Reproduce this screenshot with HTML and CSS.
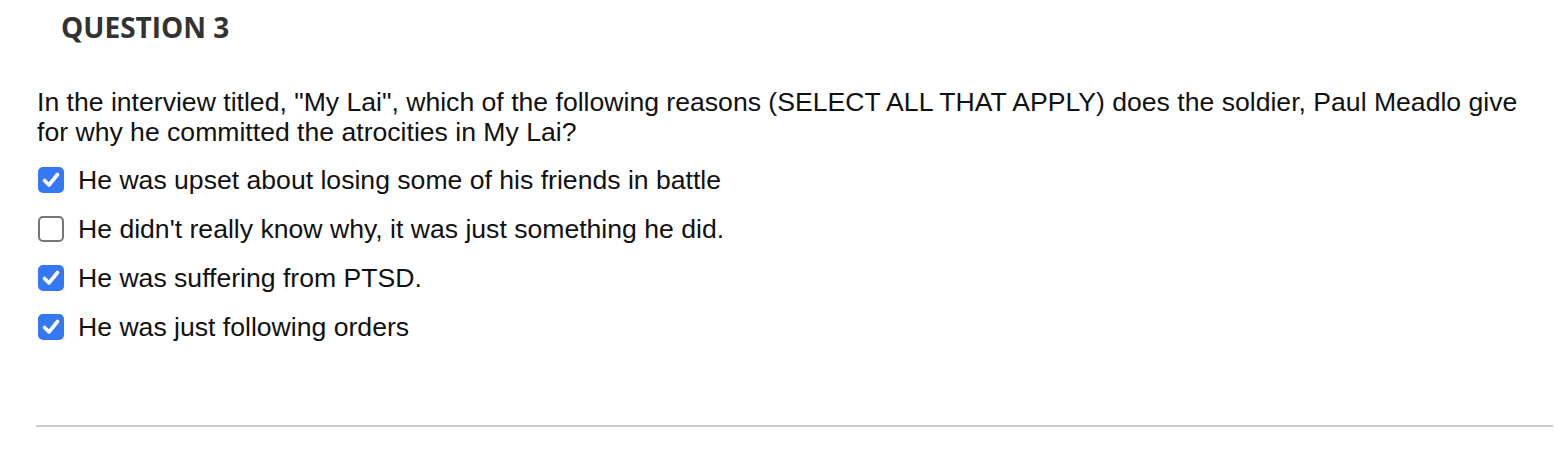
FILE: index.html
```html
<!DOCTYPE html>
<html>
<head>
<meta charset="utf-8">
<link rel="stylesheet" href="styles.css">
</head>
<body>
<div class="question">
  <h2 class="q-title">QUESTION 3</h2>
  <p class="q-text">In the interview titled, "My Lai", which of the following reasons (SELECT ALL THAT APPLY) does the soldier, Paul Meadlo give for why he committed the atrocities in My Lai?</p>
  <ul class="options">
    <li class="option"><span class="box checked"><svg viewBox="0 0 26 26"><path d="M6.5 13.5 L11 18 L19.5 7.5" fill="none" stroke="#fff" stroke-width="3.6" stroke-linecap="round" stroke-linejoin="round"/></svg></span><span class="label">He was upset about losing some of his friends in battle</span></li>
    <li class="option"><span class="box"></span><span class="label">He didn't really know why, it was just something he did.</span></li>
    <li class="option"><span class="box checked"><svg viewBox="0 0 26 26"><path d="M6.5 13.5 L11 18 L19.5 7.5" fill="none" stroke="#fff" stroke-width="3.6" stroke-linecap="round" stroke-linejoin="round"/></svg></span><span class="label">He was suffering from PTSD.</span></li>
    <li class="option"><span class="box checked"><svg viewBox="0 0 26 26"><path d="M6.5 13.5 L11 18 L19.5 7.5" fill="none" stroke="#fff" stroke-width="3.6" stroke-linecap="round" stroke-linejoin="round"/></svg></span><span class="label">He was just following orders</span></li>
  </ul>
  <hr class="divider">
</div>
</body>
</html>
```
FILE: styles.css
```css
html, body {
  margin: 0;
  padding: 0;
  background: #fff;
}
.question {
  padding: 0 1px 0 37px;
}
.q-title {
  margin: 0;
  padding: 9px 0 0 24px;
  font-family: "Open Sans", sans-serif;
  font-weight: 700;
  font-size: 28px;
  line-height: 36px;
  color: #333;
}
.q-text {
  margin: 42px 20px 0 0;
  font-family: "Liberation Sans", Arial, sans-serif;
  font-size: 26.6px;
  line-height: 30px;
  color: #111;
}
.options {
  list-style: none;
  margin: 18px 0 0 0;
  padding: 0;
  display: flex;
  flex-direction: column;
  gap: 19px;
}
.option {
  display: flex;
  align-items: center;
  gap: 14px;
  height: 30px;
  font-family: "Liberation Sans", Arial, sans-serif;
  font-size: 26.6px;
  color: #111;
}
.box {
  flex: none;
  width: 26px;
  height: 26px;
  margin-left: 1px;
  box-sizing: border-box;
  border: 2px solid #767676;
  border-radius: 5px;
  background: #fff;
}
.box.checked {
  border: none;
  background: #3478f6;
}
.box svg {
  display: block;
  width: 26px;
  height: 26px;
}
.divider {
  margin: 83px 0 0 -1px;
  border: none;
  border-top: 2px solid #cbcbcb;
  height: 0;
}
```
